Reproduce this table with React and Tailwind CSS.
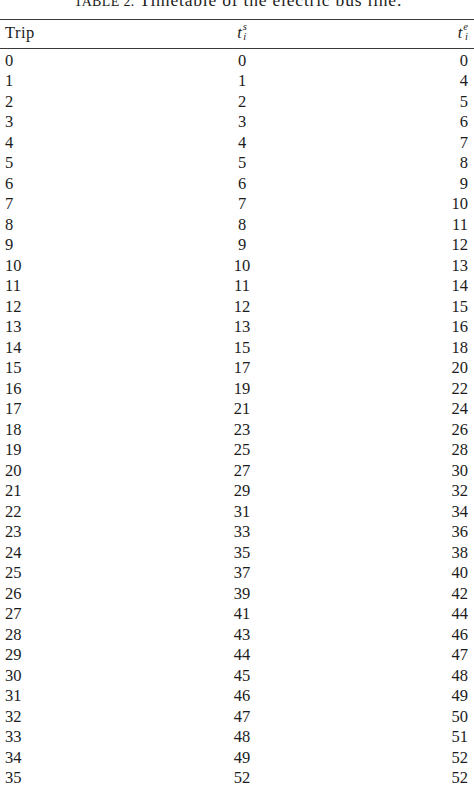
import React from 'react';

// timetable rows: trip, start time, end time
const rows = [
  [0, 0, 0], [1, 1, 4], [2, 2, 5], [3, 3, 6], [4, 4, 7], [5, 5, 8],
  [6, 6, 9], [7, 7, 10], [8, 8, 11], [9, 9, 12], [10, 10, 13], [11, 11, 14],
  [12, 12, 15], [13, 13, 16], [14, 15, 18], [15, 17, 20], [16, 19, 22], [17, 21, 24],
  [18, 23, 26], [19, 25, 28], [20, 27, 30], [21, 29, 32], [22, 31, 34], [23, 33, 36],
  [24, 35, 38], [25, 37, 40], [26, 39, 42], [27, 41, 44], [28, 43, 46], [29, 44, 47],
  [30, 45, 48], [31, 46, 49], [32, 47, 50], [33, 48, 51], [34, 49, 52], [35, 52, 52],
];

const TimeSymbol = ({ sup }) => (
  <span className="inline-flex items-start">
    <span className="italic">t</span>
    <span className="inline-flex flex-col text-[10.5px] leading-[10px] italic -mt-[1px] ml-[1px]">
      <span>{sup}</span>
      <span>i</span>
    </span>
  </span>
);

const Row = ({ children }) => (
  <div className="grid grid-cols-[195px_84px_1fr] leading-[20.5px]">{children}</div>
);

const App = () => {
  return (
    <div
      className="w-[474px] h-[786px] overflow-hidden bg-white text-[#1c1c1c] text-[16.5px]"
      style={{ fontFamily: '"Liberation Serif", "DejaVu Serif", serif' }}
    >
      <p className="text-center text-[17.5px] leading-[16px] -mt-[8px] tracking-[0.8px] pl-[2px]">
        <span className="tracking-wide text-[14px]">TABLE 2.</span> Timetable of the electric bus line.
      </p>

      <div className="mt-[9px] border-t-[1.5px] border-[#3a3a3a]" />

      <div className="pl-[5px] pr-[6px] pt-[3px] pb-[4px]">
        <Row>
          <span className="tracking-[0.5px]">Trip</span>
          <span className="text-center"><TimeSymbol sup="s" /></span>
          <span className="text-right"><TimeSymbol sup="e" /></span>
        </Row>
      </div>

      <div className="border-t border-[#3a3a3a]" />

      <div className="pl-[5px] pr-[6px] pt-[2px]">
        {rows.map(([trip, start, end]) => (
          <Row key={trip}>
            <span>{trip}</span>
            <span className="text-center">{start}</span>
            <span className="text-right">{end}</span>
          </Row>
        ))}
      </div>
    </div>
  );
};

export default App;
